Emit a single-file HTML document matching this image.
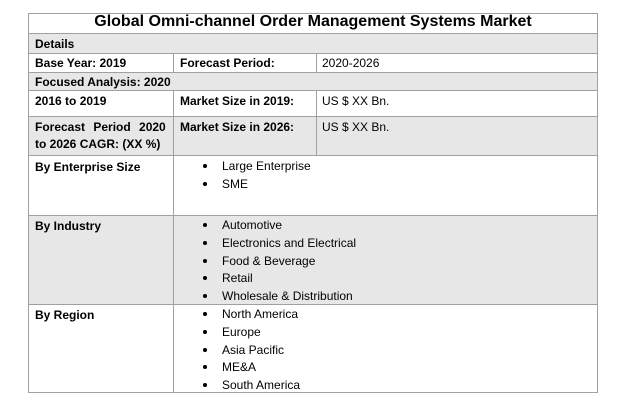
<!DOCTYPE html>
<html><head><style>
body{margin:0;width:620px;height:405px;background:#fff;font-family:"Liberation Sans",sans-serif;color:#000;position:relative;overflow:hidden}
.r{position:absolute;left:28px;width:570px;border-top:1px solid #a0a0a0;box-sizing:border-box}
.g{background:#e7e7e7}
.t{position:absolute;font-size:12px;white-space:nowrap}
.b{font-weight:bold}
.v{position:absolute;width:1px;background:#a0a0a0}
.bul{position:absolute;left:203px;width:4px;height:4px;border-radius:50%;background:#000}
</style></head><body>
<div class="r" style="top:13px;height:20px"></div>
<div class="r g" style="top:33px;height:20px"></div>
<div class="r" style="top:53px;height:19px"></div>
<div class="r g" style="top:72px;height:18px"></div>
<div class="r" style="top:90px;height:26px"></div>
<div class="r g" style="top:116px;height:40px"></div>
<div class="r" style="top:155px;height:60px"></div>
<div class="r g" style="top:215px;height:89px"></div>
<div class="r" style="top:304px;height:89px;border-bottom:1px solid #a0a0a0"></div>
<div class="v" style="left:28px;top:13px;height:380px"></div>
<div class="v" style="left:597px;top:13px;height:380px"></div>
<div class="v" style="left:173px;top:53px;height:19px"></div>
<div class="v" style="left:316px;top:53px;height:19px"></div>
<div class="v" style="left:173px;top:90px;height:303px"></div>
<div class="v" style="left:316px;top:90px;height:66px"></div>
<div class="t b" style="left:0;width:626px;text-align:center;top:13px;font-size:16px">Global Omni-channel Order Management Systems Market</div>
<div class="t b" style="left:35px;top:37px">Details</div>
<div class="t b" style="left:35px;top:56px">Base Year: 2019</div>
<div class="t b" style="left:180px;top:56px">Forecast Period:</div>
<div class="t" style="left:322px;top:56px">2020-2026</div>
<div class="t b" style="left:35px;top:75px">Focused Analysis: 2020</div>
<div class="t b" style="left:35px;top:94px">2016 to 2019</div>
<div class="t b" style="left:180px;top:94px">Market Size in 2019:</div>
<div class="t" style="left:322px;top:94px">US $ XX Bn.</div>
<div class="t b" style="left:35px;top:120px;word-spacing:5px">Forecast Period 2020</div>
<div class="t b" style="left:35px;top:137px">to 2026 CAGR: (XX %)</div>
<div class="t b" style="left:180px;top:120px">Market Size in 2026:</div>
<div class="t" style="left:322px;top:120px">US $ XX Bn.</div>
<div class="t b" style="left:35px;top:160px">By Enterprise Size</div>
<div class="t b" style="left:35px;top:219px">By Industry</div>
<div class="t b" style="left:35px;top:308px">By Region</div>
<div class="bul" style="top:164px"></div><div class="t" style="left:222px;top:159px">Large Enterprise</div>
<div class="bul" style="top:182px"></div><div class="t" style="left:222px;top:177px">SME</div>
<div class="bul" style="top:223px"></div><div class="t" style="left:222px;top:218px">Automotive</div>
<div class="bul" style="top:241px"></div><div class="t" style="left:222px;top:236px">Electronics and Electrical</div>
<div class="bul" style="top:259px"></div><div class="t" style="left:222px;top:254px">Food &amp; Beverage</div>
<div class="bul" style="top:276px"></div><div class="t" style="left:222px;top:271px">Retail</div>
<div class="bul" style="top:294px"></div><div class="t" style="left:222px;top:289px">Wholesale &amp; Distribution</div>
<div class="bul" style="top:312px"></div><div class="t" style="left:222px;top:307px">North America</div>
<div class="bul" style="top:330px"></div><div class="t" style="left:222px;top:325px">Europe</div>
<div class="bul" style="top:348px"></div><div class="t" style="left:222px;top:343px">Asia Pacific</div>
<div class="bul" style="top:365px"></div><div class="t" style="left:222px;top:360px">ME&amp;A</div>
<div class="bul" style="top:383px"></div><div class="t" style="left:222px;top:378px">South America</div>
</body></html>
